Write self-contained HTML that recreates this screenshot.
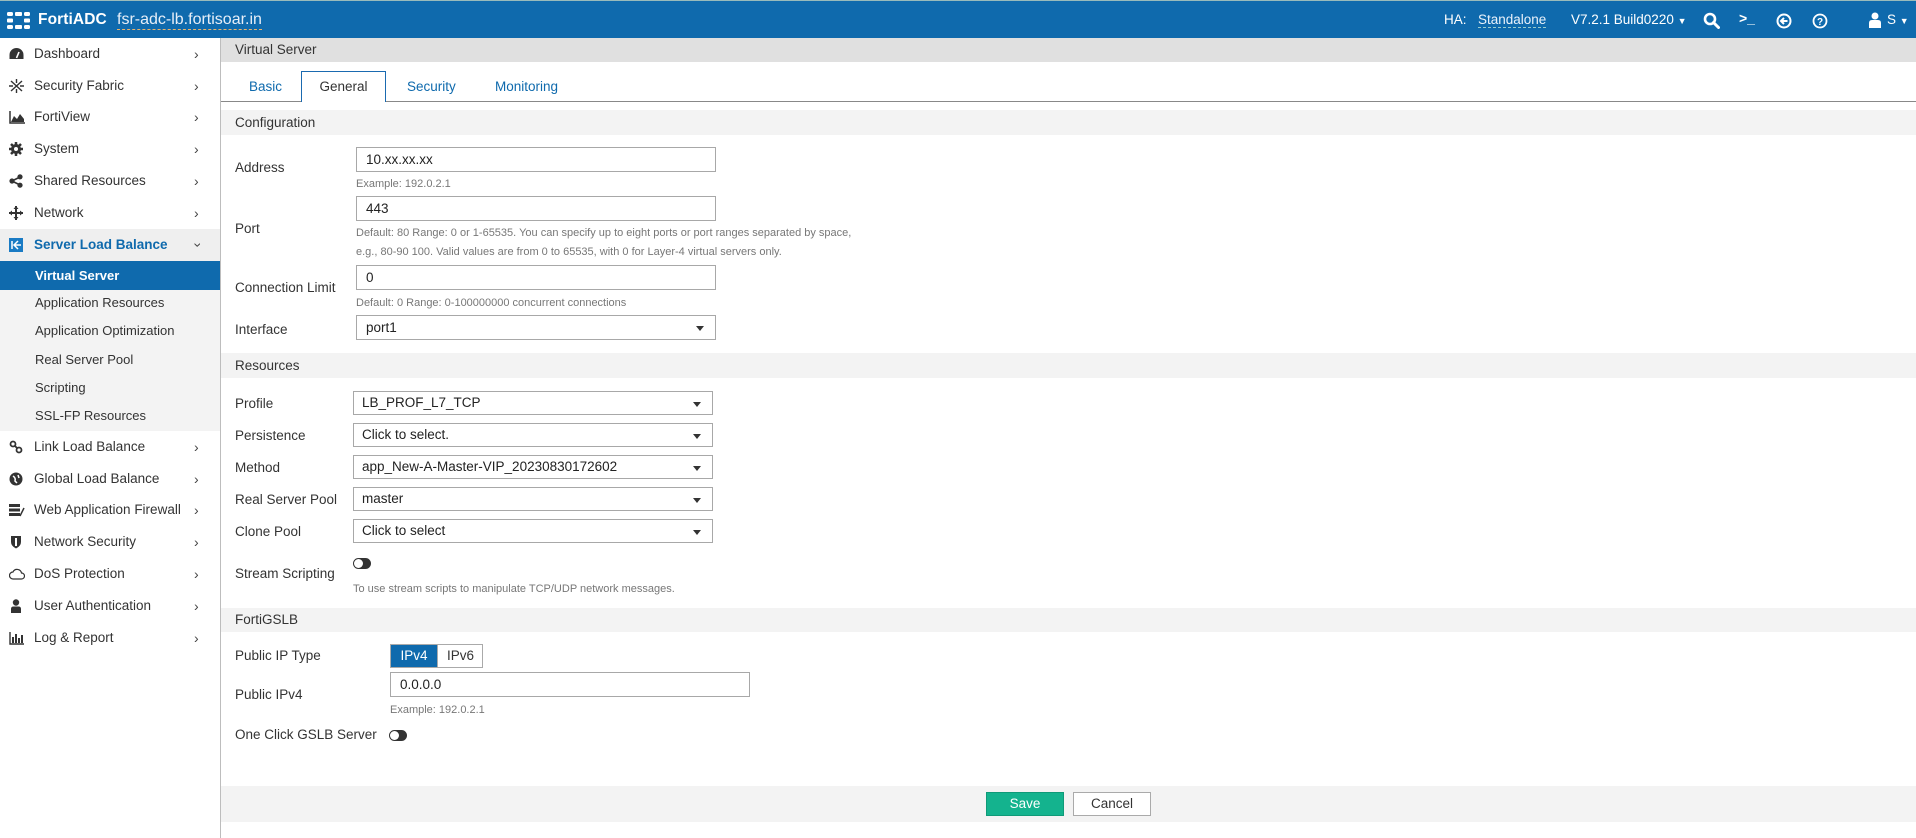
<!DOCTYPE html>
<html><head><meta charset="utf-8">
<style>
*{margin:0;padding:0;box-sizing:border-box}
body{width:1916px;height:838px;overflow:hidden;background:#fff;font-family:"Liberation Sans",sans-serif;color:#333;position:relative;font-size:13px}
.abs{position:absolute}
#hdr{left:0;top:0;width:1916px;height:38px;background:#0f6aad;border-top:1px solid #9bb;color:#fff}
#side{left:0;top:38px;width:221px;height:800px;border-right:1px solid #bdbdbd;background:#fff}
.mi{position:absolute;left:0;width:220px;height:32px;line-height:32px;font-size:13.5px;color:#333}
.mi .t{position:absolute;left:34px}
.mi .ch{position:absolute;left:194px;top:0;font-size:14px;color:#444}
.mi svg{position:absolute;left:9px;top:9px}
.sub{position:absolute;left:0;width:220px;height:28px;line-height:28px;font-size:13px;padding-left:35px}
.lbl{position:absolute;left:235px;font-size:13.5px;color:#333}
.inp{position:absolute;border:1px solid #a8a8a8;background:#fff;font-size:13.5px;padding-left:9px;line-height:23px;color:#222}
.sel{position:absolute;left:353px;width:360px;height:24px;border:1px solid #a8a8a8;font-size:13.5px;padding-left:8px;line-height:21px;color:#222}
.sel:after,.inp.dd:after{content:"";position:absolute;right:11px;top:10px;border-left:4.5px solid transparent;border-right:4.5px solid transparent;border-top:5px solid #333}
.help{position:absolute;font-size:11px;color:#777}
.band{position:absolute;left:221px;width:1695px;background:#f3f3f3;font-size:13.5px;padding-left:14px}
.tog{position:absolute;width:18px;height:11px;border-radius:6px;background:#333;border:1px solid #333}
.tog:before{content:"";position:absolute;left:0;top:0;width:9px;height:9px;border-radius:50%;background:#fff}
</style></head><body>
<div id="hdr" class="abs">
 <svg class="abs" style="left:7px;top:11px" width="23" height="17" viewBox="0 0 23 17" fill="#fff">
  <rect x="0" y="0" width="6" height="4" rx="1.5"/><rect x="8" y="0" width="7" height="4" rx="1"/><rect x="17" y="0" width="6" height="4" rx="1.5"/>
  <rect x="0" y="6.5" width="6" height="4" rx="1"/><rect x="17" y="6.5" width="6" height="4" rx="1"/>
  <rect x="0" y="13" width="6" height="4" rx="1.5"/><rect x="8" y="13" width="7" height="4" rx="1"/><rect x="17" y="13" width="6" height="4" rx="1.5"/>
 </svg>
 <div class="abs" style="left:38px;top:10px;font-size:15.5px;font-weight:bold;letter-spacing:.1px">FortiADC</div>
 <div class="abs" style="left:117px;top:10px;font-size:16px;color:#e6eef8;border-bottom:1px dashed #e8b36a;line-height:18px">fsr-adc-lb.fortisoar.in</div>
 <div class="abs" style="left:1444px;top:11px;font-size:13.5px">HA:</div>
 <div class="abs" style="left:1478px;top:11px;font-size:13.5px;color:#eaf2fb;border-bottom:1px dashed #9cc">Standalone</div>
 <div class="abs" style="left:1571px;top:11px;font-size:13.5px">V7.2.1 Build0220 <span style="font-size:9px">▼</span></div>
 <svg class="abs" style="left:1703px;top:11px" width="17" height="17" viewBox="0 0 17 17"><circle cx="7" cy="7" r="5" stroke="#fff" stroke-width="2.6" fill="none"/><path d="M10.5 10.5L15.5 15.5" stroke="#fff" stroke-width="3" stroke-linecap="round"/></svg>
 <div class="abs" style="left:1739px;top:9px;font-size:14px;font-weight:bold">&gt;_</div>
 <svg class="abs" style="left:1776px;top:12px" width="16" height="16" viewBox="0 0 16 16"><circle cx="8" cy="8" r="6.5" stroke="#fff" stroke-width="2" fill="none"/><path d="M11.5 8H5.5M8 5L5 8L8 11" stroke="#fff" stroke-width="2" fill="none"/></svg>
 <svg class="abs" style="left:1812px;top:12px" width="16" height="16" viewBox="0 0 16 16"><circle cx="8" cy="8" r="6.5" stroke="#fff" stroke-width="1.8" fill="none"/><text x="8" y="12" font-size="10" font-weight="bold" fill="#fff" text-anchor="middle" font-family="Liberation Sans">?</text></svg>
 <svg class="abs" style="left:1869px;top:11px" width="12" height="16" viewBox="0 0 12 16" fill="#fff"><circle cx="6" cy="4" r="3.5"/><path d="M0 16V11Q0 8 3 8H9Q12 8 12 11V16Z"/></svg>
 <div class="abs" style="left:1887px;top:11px;font-size:13.5px">S <span style="font-size:9px">▼</span></div>
</div>

<div id="side" class="abs">
 <div class="mi" style="top:0"><svg width="15" height="14" viewBox="0 0 15 14"><path d="M7.5 1A7 7 0 0 0 .5 8V12H14.5V8A7 7 0 0 0 7.5 1Z" fill="#333"/><path d="M7.5 11L10 5" stroke="#fff" stroke-width="1.6"/></svg><span class="t">Dashboard</span><span class="ch">›</span></div>
 <div class="mi" style="top:32px"><svg width="15" height="14" viewBox="0 0 15 14" stroke="#333" stroke-width="1.4"><path d="M2 2L13 12M13 2L2 12M7.5 0V4M7.5 10V14M0 7H4M11 7H15"/></svg><span class="t">Security Fabric</span><span class="ch">›</span></div>
 <div class="mi" style="top:63px"><svg width="16" height="14" viewBox="0 0 16 14"><path d="M1 1V13H16" stroke="#333" stroke-width="1.5" fill="none"/><path d="M2 12L5 6L8 9L11 4L15 9V12Z" fill="#333"/></svg><span class="t">FortiView</span><span class="ch">›</span></div>
 <div class="mi" style="top:95px"><svg width="14" height="14" viewBox="0 0 14 14"><circle cx="7" cy="7" r="5" fill="#333"/><path d="M7 0V14M0 7H14M2 2L12 12M12 2L2 12" stroke="#333" stroke-width="2.5"/><circle cx="7" cy="7" r="2" fill="#fff"/></svg><span class="t">System</span><span class="ch">›</span></div>
 <div class="mi" style="top:127px"><svg width="14" height="14" viewBox="0 0 14 14" fill="#333"><circle cx="3" cy="7" r="2.6"/><circle cx="11" cy="2.8" r="2.6"/><circle cx="11" cy="11.2" r="2.6"/><path d="M3 7L11 3M3 7L11 11" stroke="#333" stroke-width="1.6"/></svg><span class="t">Shared Resources</span><span class="ch">›</span></div>
 <div class="mi" style="top:159px"><svg width="14" height="14" viewBox="0 0 14 14"><path d="M7 0V14M0 7H14" stroke="#333" stroke-width="2"/><path d="M7 0L4.5 3H9.5ZM7 14L4.5 11H9.5ZM0 7L3 4.5V9.5ZM14 7L11 4.5V9.5Z" fill="#333"/></svg><span class="t">Network</span><span class="ch">›</span></div>
 <div class="mi" style="top:191px;background:#efefef;color:#0f6aad;font-weight:bold"><svg width="14" height="14" viewBox="0 0 14 14"><rect width="14" height="14" fill="#1a7bc4"/><path d="M9 3L5 7L9 11M5 7H12M3 3V11" stroke="#fff" stroke-width="1.5" fill="none"/></svg><span class="t">Server Load Balance</span><span class="ch" style="font-weight:normal;transform:rotate(90deg);left:196px">›</span></div>
 <div class="sub" style="top:223px;height:29px;line-height:29px;background:#0f6aad;color:#fff;font-weight:bold">Virtual Server</div>
 <div class="abs" style="left:0;top:252px;width:220px;height:141px;background:#f3f3f3"></div>
 <div class="sub" style="top:251px">Application Resources</div>
 <div class="sub" style="top:279px">Application Optimization</div>
 <div class="sub" style="top:308px">Real Server Pool</div>
 <div class="sub" style="top:336px">Scripting</div>
 <div class="sub" style="top:364px">SSL-FP Resources</div>
 <div class="mi" style="top:393px"><svg width="14" height="14" viewBox="0 0 14 14" stroke="#333" stroke-width="1.8" fill="none"><circle cx="4" cy="4" r="2.5"/><circle cx="10" cy="10" r="2.5"/><path d="M5.5 5.5L8.5 8.5"/></svg><span class="t">Link Load Balance</span><span class="ch">›</span></div>
 <div class="mi" style="top:425px"><svg width="14" height="14" viewBox="0 0 14 14"><circle cx="7" cy="7" r="6.5" fill="#333"/><path d="M4 4Q7 6 6 9L8 11M9 3L10 6" stroke="#fff" stroke-width="1.5" fill="none"/></svg><span class="t">Global Load Balance</span><span class="ch">›</span></div>
 <div class="mi" style="top:456px"><svg width="16" height="14" viewBox="0 0 16 14" fill="#333"><rect x="0" y="1" width="11" height="3"/><rect x="0" y="5.5" width="11" height="3"/><rect x="0" y="10" width="11" height="3"/><path d="M11 13L15 5" stroke="#333" stroke-width="1.5"/></svg><span class="t">Web Application Firewall</span><span class="ch">›</span></div>
 <div class="mi" style="top:488px"><svg width="14" height="14" viewBox="0 0 14 14"><path d="M2 1H12V7Q12 11 7 13.5Q2 11 2 7Z" fill="#333"/><path d="M7 3V11" stroke="#fff" stroke-width="2"/></svg><span class="t">Network Security</span><span class="ch">›</span></div>
 <div class="mi" style="top:520px"><svg width="16" height="14" viewBox="0 0 16 14"><path d="M4 12H12.5A3 3 0 0 0 12.5 6A4.5 4.5 0 0 0 4 5A3.5 3.5 0 0 0 4 12Z" stroke="#333" stroke-width="1.2" fill="none"/></svg><span class="t">DoS Protection</span><span class="ch">›</span></div>
 <div class="mi" style="top:552px"><svg width="14" height="14" viewBox="0 0 14 14" fill="#333"><circle cx="7" cy="3.5" r="3.2"/><path d="M2 14V10Q2 7.5 4.5 7.5H9.5Q12 7.5 12 10V14Z"/></svg><span class="t">User Authentication</span><span class="ch">›</span></div>
 <div class="mi" style="top:584px"><svg width="15" height="14" viewBox="0 0 15 14" fill="#333"><path d="M1 1V13H15" stroke="#333" stroke-width="1.4" fill="none"/><rect x="3" y="6" width="2" height="6"/><rect x="6" y="3" width="2" height="9"/><rect x="9" y="7" width="2" height="5"/><rect x="12" y="4" width="2" height="8"/></svg><span class="t">Log &amp; Report</span><span class="ch">›</span></div>
</div>

<div class="abs" style="left:221px;top:38px;width:1695px;height:24px;background:#e0e0e0;font-size:13.5px;line-height:24px;padding-left:14px">Virtual Server</div>
<div class="abs" style="left:221px;top:101px;width:1695px;height:1px;background:#888"></div>
<div class="abs" style="left:249px;top:79px;font-size:13.5px;color:#0f6aad">Basic</div>
<div class="abs" style="left:301px;top:71px;width:85px;height:31px;border:1px solid #1a6ab0;border-bottom:none;background:#fff;font-size:13.5px;text-align:center;line-height:29px">General</div>
<div class="abs" style="left:407px;top:79px;font-size:13.5px;color:#0f6aad">Security</div>
<div class="abs" style="left:495px;top:79px;font-size:13.5px;color:#0f6aad">Monitoring</div>

<div class="band" style="top:110px;height:25px;line-height:25px">Configuration</div>
<div class="lbl" style="top:160px">Address</div>
<div class="inp" style="left:356px;top:147px;width:360px;height:25px">10.xx.xx.xx</div>
<div class="help" style="left:356px;top:178px">Example: 192.0.2.1</div>
<div class="lbl" style="top:221px">Port</div>
<div class="inp" style="left:356px;top:196px;width:360px;height:25px">443</div>
<div class="help" style="left:356px;top:227px">Default: 80 Range: 0 or 1-65535. You can specify up to eight ports or port ranges separated by space,</div>
<div class="help" style="left:356px;top:246px">e.g., 80-90 100. Valid values are from 0 to 65535, with 0 for Layer-4 virtual servers only.</div>
<div class="lbl" style="top:280px">Connection Limit</div>
<div class="inp" style="left:356px;top:265px;width:360px;height:25px">0</div>
<div class="help" style="left:356px;top:297px">Default: 0 Range: 0-100000000 concurrent connections</div>
<div class="lbl" style="top:322px">Interface</div>
<div class="inp dd" style="left:356px;top:315px;width:360px;height:25px">port1</div>

<div class="band" style="top:353px;height:25px;line-height:25px">Resources</div>
<div class="lbl" style="top:396px">Profile</div>
<div class="sel" style="top:391px">LB_PROF_L7_TCP</div>
<div class="lbl" style="top:428px">Persistence</div>
<div class="sel" style="top:423px">Click to select.</div>
<div class="lbl" style="top:460px">Method</div>
<div class="sel" style="top:455px">app_New-A-Master-VIP_20230830172602</div>
<div class="lbl" style="top:492px">Real Server Pool</div>
<div class="sel" style="top:487px">master</div>
<div class="lbl" style="top:524px">Clone Pool</div>
<div class="sel" style="top:519px">Click to select</div>
<div class="lbl" style="top:566px">Stream Scripting</div>
<div class="tog" style="left:353px;top:558px"></div>
<div class="help" style="left:353px;top:583px">To use stream scripts to manipulate TCP/UDP network messages.</div>

<div class="band" style="top:608px;height:24px;line-height:24px">FortiGSLB</div>
<div class="lbl" style="top:648px">Public IP Type</div>
<div class="abs" style="left:390px;top:644px;width:93px;height:24px;border:1px solid #aaa;font-size:13.5px;line-height:22px">
 <div class="abs" style="left:0;top:0;width:46px;height:22px;background:#0f6aad;color:#fff;text-align:center">IPv4</div>
 <div class="abs" style="left:46px;top:0;width:46px;height:22px;text-align:center;border-left:1px solid #aaa">IPv6</div>
</div>
<div class="lbl" style="top:687px">Public IPv4</div>
<div class="inp" style="left:390px;top:672px;width:360px;height:25px">0.0.0.0</div>
<div class="help" style="left:390px;top:704px">Example: 192.0.2.1</div>
<div class="lbl" style="top:727px">One Click GSLB Server</div>
<div class="tog" style="left:389px;top:730px"></div>

<div class="abs" style="left:221px;top:786px;width:1695px;height:36px;background:#f3f3f3"></div>
<div class="abs" style="left:986px;top:792px;width:78px;height:24px;background:#14b38e;border:1px solid #0f9a78;color:#fff;font-size:13.5px;text-align:center;line-height:22px">Save</div>
<div class="abs" style="left:1073px;top:792px;width:78px;height:24px;background:#fff;border:1px solid #aaa;color:#333;font-size:13.5px;text-align:center;line-height:22px">Cancel</div>
</body></html>
